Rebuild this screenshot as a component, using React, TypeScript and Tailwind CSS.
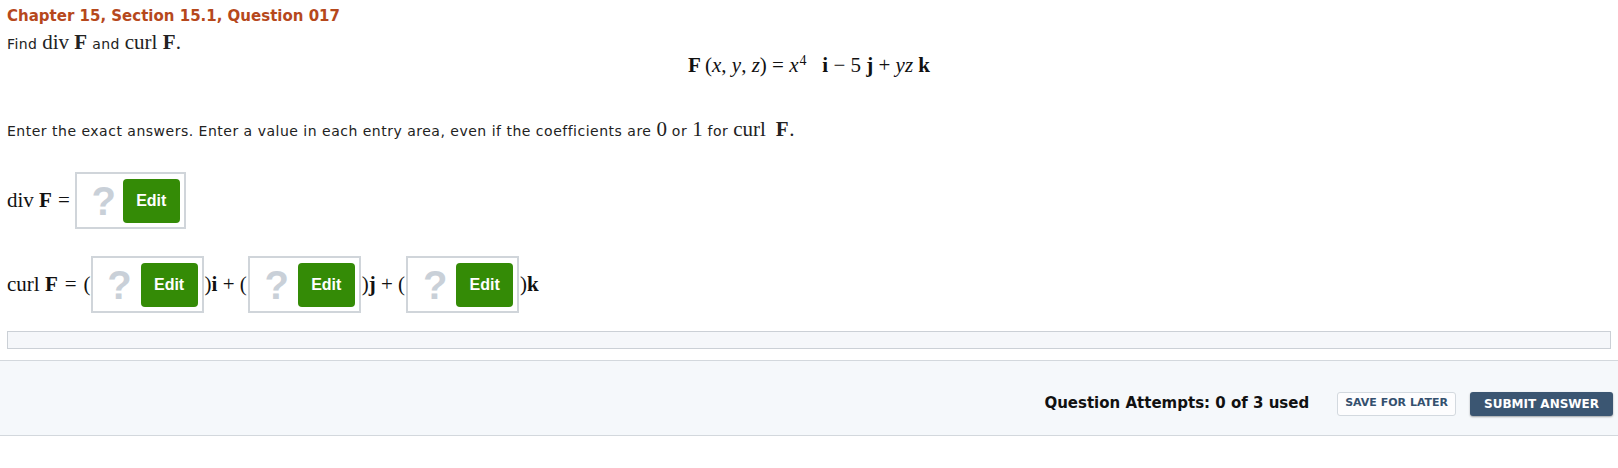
import React from 'react';

const serif = "font-['Liberation_Serif',serif]";

function AnswerBox({ wide = false }: { wide?: boolean }) {
  return (
    <div
      className={`flex items-center h-[57px] ${wide ? 'w-[113px]' : 'w-[111px]'} border-2 border-[#d0d5da] bg-white pl-[12px] pr-[4px]`}
    >
      <span className="font-['Liberation_Sans',sans-serif] font-bold text-[40px] leading-none text-[#c9d0d8] w-[30px] text-center">?</span>
      <button className="ml-auto h-[44px] w-[57px] rounded-[4px] bg-[#348b06] text-white font-['Liberation_Sans',sans-serif] font-bold text-[16px]">
        Edit
      </button>
    </div>
  );
}

export default function App() {
  return (
    <div className="min-h-screen bg-white text-[#222] font-['DejaVu_Sans',Verdana,sans-serif] overflow-hidden">
      <div className="px-[7px] pt-[7px]">
        {/* Header */}
        <h1 className="text-[15px] leading-[18px] font-bold text-[#b6481c]">
          Chapter 15, Section 15.1, Question 017
        </h1>
        <p className="mt-[6px] text-[14px] leading-[22px] text-[#222] tracking-[0.4px]">
          Find <span className={`${serif} text-[21px] tracking-normal`}>div </span>
          <span className={`${serif} text-[21px] font-bold`}>F</span> and{' '}
          <span className={`${serif} text-[21px] tracking-normal`}>curl </span>
          <span className={`${serif} text-[21px] font-bold`}>F</span>
          <span className={`${serif} text-[21px]`}>.</span>
        </p>

        {/* Formula */}
        <div className={`${serif} text-[21px] leading-[24px] text-center mt-[-2px] text-[#111]`}>
          <span className="font-bold">F</span>&thinsp;(<i>x</i>, <i>y</i>, <i>z</i>)&nbsp;=&nbsp;<i>x</i>
          <sup className="text-[14px] ml-[1px]">4</sup>&nbsp;&nbsp;&nbsp;<span className="font-bold">i</span>&nbsp;−&nbsp;5&nbsp;
          <span className="font-bold">j</span>&nbsp;+&nbsp;<i>yz</i>&nbsp;<span className="font-bold">k</span>
        </div>

        {/* Instructions */}
        <p className="mt-[41px] text-[14px] leading-[22px] text-[#222] tracking-[0.5px]">
          Enter the exact answers. Enter a value in each entry area, even if the coefficients are{' '}
          <span className={`${serif} text-[21px] tracking-normal`}>0</span> or{' '}
          <span className={`${serif} text-[21px] tracking-normal`}>1</span> for{' '}
          <span className={`${serif} text-[21px] tracking-normal`}>curl</span>&nbsp;{' '}
          <span className={`${serif} text-[21px] font-bold`}>F</span>
          <span className={`${serif} text-[21px]`}>.</span>
        </p>

        {/* div F row */}
        <div className={`${serif} mt-[30px] flex items-center text-[21px] text-[#111]`}>
          <span className="mr-[3px]">
            div <span className="font-bold">F</span>
            <span className="ml-[6px] mr-[2px]">=</span>
          </span>
          <AnswerBox />
        </div>

        {/* curl F row */}
        <div className={`${serif} mt-[27px] flex items-center text-[21px] text-[#111]`}>
          <span>
            curl <span className="font-bold">F</span>
            <span className="mx-[7px]">=</span>(
          </span>
          <AnswerBox wide />
          <span className="mx-[1px]">
            )<span className="font-bold">i</span>&nbsp;+&nbsp;(
          </span>
          <AnswerBox wide />
          <span className="mx-[1px]">
            )<span className="font-bold">j</span>&nbsp;+&nbsp;(
          </span>
          <AnswerBox wide />
          <span className="ml-[1px]">
            )<span className="font-bold">k</span>
          </span>
        </div>

        {/* Hint / answer area */}
        <div className="mt-[18px] h-[18px] border border-[#cbd0d6] bg-[#f5f7fa]" />
      </div>

      {/* Footer */}
      <div className="mt-[11px] h-[76px] border-y border-[#d3d8dd] bg-[#f5f8fb] flex items-center justify-end pr-[5px] pt-[11px]">
        <span className="text-[15px] font-bold text-[#111] mr-[28px]">
          Question Attempts: 0 of 3 used
        </span>
        <button className="h-[24px] px-[7px] rounded-[3px] border border-[#d3d9df] bg-[#fdfdfe] text-[11px] font-bold text-[#34506e] mr-[14px]">
          SAVE FOR LATER
        </button>
        <button className="h-[24px] px-[14px] rounded-[3px] bg-[#3b5672] text-[12px] font-bold text-white shadow-[0_1px_2px_rgba(0,0,0,0.35)]">
          SUBMIT ANSWER
        </button>
      </div>
    </div>
  );
}
